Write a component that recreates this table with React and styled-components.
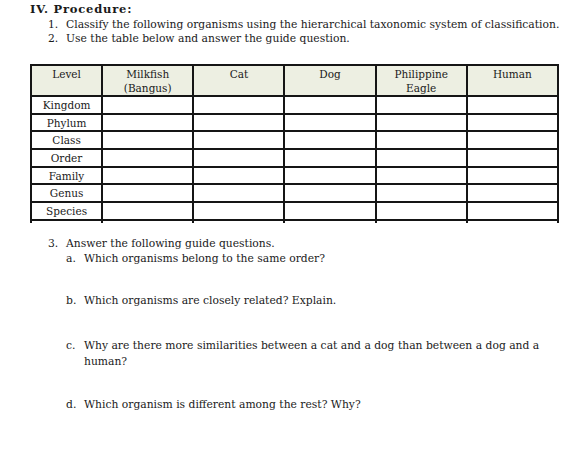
import React from "react";
import styled, { createGlobalStyle } from "styled-components";

const columns = ["Level", "Milkfish\n(Bangus)", "Cat", "Dog", "Philippine\nEagle", "Human"];
const levels = ["Kingdom", "Phylum", "Class", "Order", "Family", "Genus", "Species"];

const questions = [
  { letter: "a.", text: "Which organisms belong to the same order?", space: 26 },
  { letter: "b.", text: "Which organisms are closely related? Explain.", space: 29 },
  {
    letter: "c.",
    text: "Why are there more similarities between a cat and a dog than between a dog and a human?",
    space: 27,
  },
  { letter: "d.", text: "Which organism is different among the rest? Why?", space: 0 },
];

const App = () => {
  return (
    <>
      <GlobalStyle />
      <Page>
        <Heading>IV. Procedure:</Heading>
        <Steps>
          <Step>
            <Num>1.</Num>
            <span>Classify the following organisms using the hierarchical taxonomic system of classification.</span>
          </Step>
          <Step>
            <Num>2.</Num>
            <span>Use the table below and answer the guide question.</span>
          </Step>
        </Steps>

        <Table>
          <thead>
            <tr>
              {columns.map((c, i) => (
                <HeadCell key={i} $first={i === 0}>
                  {c}
                </HeadCell>
              ))}
            </tr>
          </thead>
          <tbody>
            {levels.map((l) => (
              <tr key={l}>
                <Cell>{l}</Cell>
                {columns.slice(1).map((c, i) => (
                  <Cell key={i} />
                ))}
              </tr>
            ))}
            <tr>
              {columns.map((c, i) => (
                <Stub key={i} />
              ))}
            </tr>
          </tbody>
        </Table>

        <Guide>
          <Step>
            <Num>3.</Num>
            <span>Answer the following guide questions.</span>
          </Step>
          <Questions>
            {questions.map((q) => (
              <Question key={q.letter} $space={q.space}>
                <Letter>{q.letter}</Letter>
                <span>{q.text}</span>
              </Question>
            ))}
          </Questions>
        </Guide>
      </Page>
    </>
  );
};

const GlobalStyle = createGlobalStyle`
  html, body {
    margin: 0;
    padding: 0;
    background: #fff;
  }
  body {
    font-family: "DejaVu Serif", "Liberation Serif", serif;
    color: #1a1a1a;
    font-size: 10.75px;
  }
`;

const Page = styled.div`
  width: 567px;
  height: 454px;
  padding: 2px 0 0 30px;
  box-sizing: border-box;
  overflow: hidden;
`;

const Heading = styled.div`
  font-weight: bold;
  font-size: 11.5px;
  letter-spacing: 0.8px;
  line-height: 14px;
`;

const Steps = styled.div`
  padding-left: 18px;
  display: flex;
  flex-direction: column;
  margin-top: 2px;
`;

const Step = styled.div`
  display: flex;
  line-height: 14px;
  white-space: nowrap;
`;

const Num = styled.span`
  width: 18px;
  flex: none;
`;

const Table = styled.table`
  margin-top: 18px;
  border-collapse: collapse;
  table-layout: fixed;
  width: 529px;
  font-size: 10.5px;
`;

const HeadCell = styled.th`
  background: #edefe2;
  border: 2px solid #151515;
  font-weight: normal;
  vertical-align: top;
  white-space: pre-line;
  line-height: 14px;
  height: 26px;
  padding: 1px 0 0;
  width: ${(p) => (p.$first ? "69px" : "89px")};
`;

const Cell = styled.td`
  border: 2px solid #151515;
  height: 15.7px;
  padding: 0;
  text-align: center;
  line-height: 14px;
`;

const Stub = styled.td`
  height: 2px;
  padding: 0;
  border-left: 2px solid #151515;
  border-right: 2px solid #151515;
`;

const Guide = styled.div`
  margin-top: 14px;
  padding-left: 18px;
`;

const Questions = styled.div`
  padding-left: 18px;
`;

const Question = styled.div`
  display: flex;
  line-height: 16px;
  width: 490px;
  margin-bottom: ${(p) => p.$space}px;
`;

const Letter = styled.span`
  width: 18px;
  flex: none;
`;

export default App;
